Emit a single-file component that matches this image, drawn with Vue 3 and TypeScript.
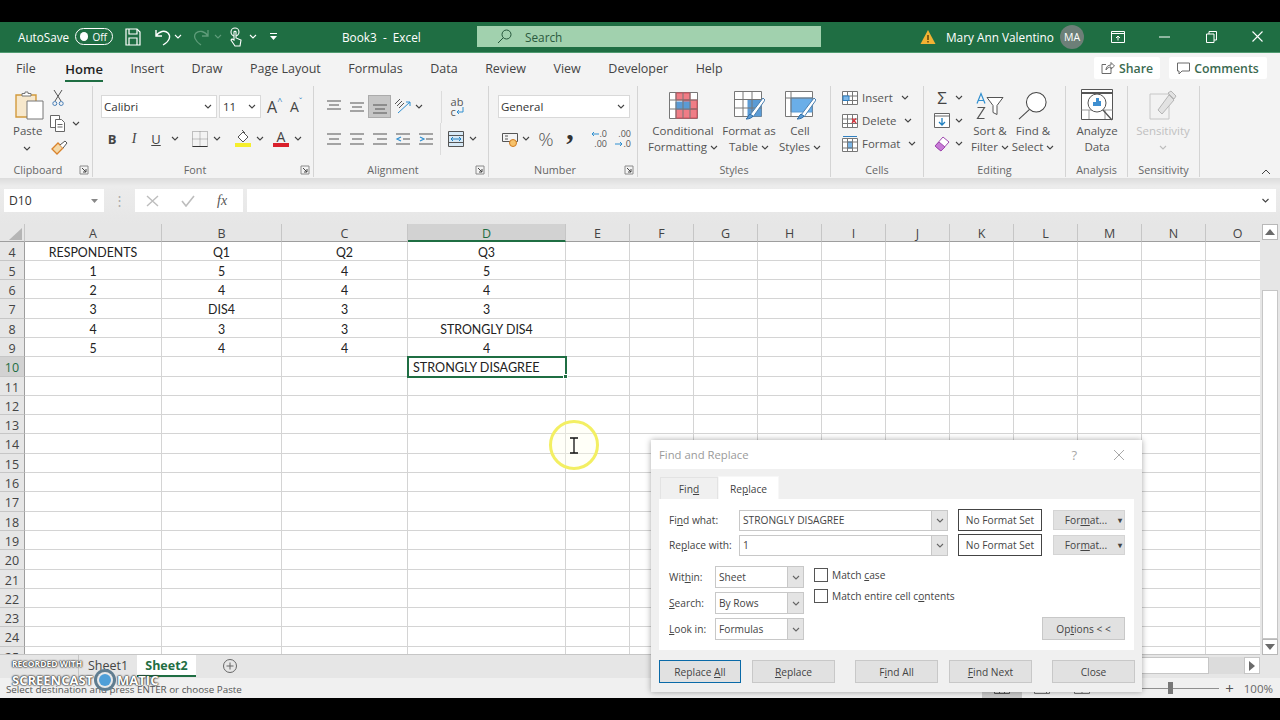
<script setup lang="ts">
interface Column {
  name: string;
  width: number;
}

const columns: Column[] = [
  { name: 'A', width: 137 },
  { name: 'B', width: 120 },
  { name: 'C', width: 126 },
  { name: 'D', width: 158 },
  { name: 'E', width: 64 },
  { name: 'F', width: 64 },
  { name: 'G', width: 64 },
  { name: 'H', width: 64 },
  { name: 'I', width: 64 },
  { name: 'J', width: 64 },
  { name: 'K', width: 64 },
  { name: 'L', width: 64 },
  { name: 'M', width: 64 },
  { name: 'N', width: 64 },
  { name: 'O', width: 64 },
];

const gridColumns = `25px ${columns.map((c) => c.width + 'px').join(' ')}`;

const cells: Record<number, string[]> = {
  4: ['RESPONDENTS', 'Q1', 'Q2', 'Q3'],
  5: ['1', '5', '4', '5'],
  6: ['2', '4', '4', '4'],
  7: ['3', 'DIS4', '3', '3'],
  8: ['4', '3', '3', 'STRONGLY DIS4'],
  9: ['5', '4', '4', '4'],
};

const rowNumbers = Array.from({ length: 22 }, (_, i) => i + 4);

const tabs = ['File', 'Home', 'Insert', 'Draw', 'Page Layout', 'Formulas', 'Data', 'Review', 'View', 'Developer', 'Help'];

function cellText(row: number, col: number) {
  return cells[row]?.[col] ?? '';
}

function isActive(row: number, col: number) {
  return row === 10 && col === 3;
}
</script>

<template>
  <div class="screen">
    <svg class="defs" width="0" height="0" aria-hidden="true">
      <symbol id="chev" viewBox="0 0 8 5">
        <path d="M1 1l3 3 3-3" fill="none" stroke="currentColor" stroke-width="1.1" />
      </symbol>
      <symbol id="launcher" viewBox="0 0 10 10">
        <path d="M1 1h8v8H1z" fill="none" stroke="#8a8a8a" />
        <path d="M3 3l4 4M7 4v3H4" fill="none" stroke="#444" />
      </symbol>
      <symbol id="align" viewBox="0 0 16 14">
        <path d="M1 2h14M3 7h10M1 12h14" stroke="#555" stroke-width="1.2" fill="none" />
      </symbol>
    </svg>

    <!-- title bar -->
    <header class="titlebar">
      <span class="autosave">AutoSave</span>
      <span class="toggle"><i class="knob"></i>Off</span>
      <svg class="t-save" width="16" height="18" viewBox="0 0 16 18" fill="none" stroke="#fff" stroke-width="1.2">
        <path d="M1 1h11l3 3v13H1z" />
        <path d="M4 1v5h8V1M4 17v-7h8v7" />
      </svg>
      <svg class="t-undo" width="20" height="18" viewBox="0 0 20 18" fill="none" stroke="#fff" stroke-width="1.4">
        <path d="M2 2v6h6M2 8c3-5 9-6 12-3s2 8-5 12" />
      </svg>
      <svg class="t-chev" width="8" height="5"><use href="#chev" /></svg>
      <svg class="t-redo" width="17" height="18" viewBox="0 0 17 18" fill="none" stroke="#5f9c7a" stroke-width="1.3">
        <path d="M15 2v6H9M15 8C12 3 6 2 3 5s-1 8 5 12" />
      </svg>
      <svg class="t-chev2" width="8" height="5"><use href="#chev" /></svg>
      <svg class="t-touch" width="13" height="20" viewBox="0 0 13 20" fill="none" stroke="#fff" stroke-width="1.1">
        <circle cx="6" cy="5" r="4" />
        <path d="M5 5v8l-2-1-1 1 4 6h5l1-6-5-2V5c0-1-2-1-2 0z" fill="#1f6e43" />
      </svg>
      <svg class="t-chev3" width="8" height="5"><use href="#chev" /></svg>
      <svg class="t-custom" width="9" height="9" viewBox="0 0 9 9" fill="#fff">
        <path d="M1 1h7v1H1zM1 4h7L4.500 8z" />
      </svg>
      <span class="doc-title">Book3&nbsp; -&nbsp; Excel</span>
      <div class="search">
        <svg width="15" height="15" viewBox="0 0 15 15" fill="none" stroke="#24553a" stroke-width="1">
          <circle cx="9.500" cy="5.500" r="4.500" />
          <path d="M6.300 8.700L1 14" />
        </svg>
        <span>Search</span>
      </div>
      <svg class="t-warn" width="16" height="16" viewBox="0 0 16 16">
        <path d="M8 1l7.500 14H.5z" fill="#f2b233" />
        <path d="M8 6v5M8 12v1.500" stroke="#4a3300" stroke-width="1.300" />
      </svg>
      <span class="user">Mary Ann Valentino</span>
      <span class="avatar">MA</span>
      <svg class="t-display" width="14" height="12" viewBox="0 0 14 12" fill="none" stroke="#fff">
        <path d="M.5.500h13v11H.500zM.5 2.500h13M7 9.500V5M5 7l2-2 2 2" />
      </svg>
      <svg class="t-min" width="11" height="2"><path d="M0 1h11" stroke="#fff" /></svg>
      <svg class="t-restore" width="11" height="12" viewBox="0 0 11 12" fill="none" stroke="#fff">
        <path d="M.5 3h7.500v8.500H.500zM3 3V.5h7.500V9H8" />
      </svg>
      <svg class="t-close" width="11" height="11" viewBox="0 0 11 11" stroke="#fff" stroke-width="1.100"><path d="M.5.500l10 10M10.500.500l-10 10" /></svg>
    </header>

    <!-- ribbon tabs -->
    <nav class="tabs">
      <span v-for="tab in tabs" :key="tab" class="tab" :class="{ 'tab-on': tab === 'Home' }">{{ tab }}</span>
      <div class="tab-actions">
        <span class="tab-btn share">
          <svg width="14" height="14" viewBox="0 0 14 14" fill="none" stroke="#6a6a6a">
            <path d="M10 6.500V12.500H1V3.500H5M5 9c0-3 2-5 5-5V1.500l3.500 3.500L10 8V6C8 6 6 7 5 9z" />
          </svg>
          Share
        </span>
        <span class="tab-btn comments">
          <svg width="13" height="13" viewBox="0 0 13 13" fill="none" stroke="#6a6a6a">
            <path d="M.5 1h12v8H5l-3 3V9H.500z" />
          </svg>
          Comments
        </span>
      </div>
    </nav>

    <!-- ribbon -->
    <section class="ribbon">
      <div class="group g-clip">
        <div class="g-body clip-body">
          <div class="paste">
            <svg width="30" height="29" viewBox="0 0 30 29">
              <path d="M1 4h20v22H1z" fill="#f7e8cc" stroke="#d29a3c" stroke-width="1.400" />
              <path d="M7 5V2.500h3V1h3v1.500h3V5z" fill="#fff" stroke="#777" />
              <path d="M12 10h16v18H12z" fill="#fff" stroke="#777" />
            </svg>
            <span>Paste</span>
            <svg class="gray-chev" width="8" height="5"><use href="#chev" /></svg>
          </div>
          <div class="clip-tools">
            <svg width="12" height="17" viewBox="0 0 12 17" fill="none" stroke="#555">
              <path d="M2 0l7 11M10 0L3 11" />
              <circle cx="2.800" cy="13.500" r="2" stroke="#4a80b8" />
              <circle cx="9.200" cy="13.500" r="2" stroke="#4a80b8" />
            </svg>
            <div class="copy-row">
              <svg width="17" height="17" viewBox="0 0 17 17" fill="#fff" stroke="#666">
                <path d="M.5.500h9v12h-9z" />
                <path d="M5.500 4.500h6l3 3v9h-9z" />
                <path d="M7.500 9.500h5M7.500 12h5" />
              </svg>
              <svg width="8" height="5"><use href="#chev" /></svg>
            </div>
            <svg width="17" height="15" viewBox="0 0 17 15" fill="none">
              <path d="M1 9l6-6 5 5-6 6z" fill="#f4d9a8" stroke="#d9822b" stroke-width="1.300" />
              <path d="M9 5l5-4 2 2-4 5" fill="#fff" stroke="#555" />
            </svg>
          </div>
        </div>
        <footer class="g-foot"><span>Clipboard</span><svg width="10" height="10"><use href="#launcher" /></svg></footer>
      </div>

      <div class="group g-font">
        <div class="g-body two-rows">
          <div class="row">
            <span class="combo font-name">Calibri<svg width="8" height="5"><use href="#chev" /></svg></span>
            <span class="combo font-size">11<svg width="8" height="5"><use href="#chev" /></svg></span>
            <span class="grow">A<sup>^</sup></span>
            <span class="shrink">A<sup>ˇ</sup></span>
          </div>
          <div class="row row-font">
            <span class="c b">B</span>
            <span class="c i">I</span>
            <span class="c u">U</span>
            <span class="ch"><svg width="8" height="5"><use href="#chev" /></svg></span>
            <span class="c sp6">
              <svg width="16" height="16" viewBox="0 0 16 16" fill="none" stroke="#8a8a8a" stroke-dasharray="1 1">
                <path d="M.5.500h15v15H.500zM8 .5v15M.5 8h15" />
                <path d="M.5 15.500h15" stroke="#333" stroke-dasharray="none" />
              </svg>
            </span>
            <span class="ch"><svg width="8" height="5"><use href="#chev" /></svg></span>
            <span class="c sp9">
              <svg width="17" height="19" viewBox="0 0 17 19">
                <path d="M3 8l5-5 5 5-5 5z" fill="#fff" stroke="#555" />
                <path d="M7 1l3 3" stroke="#555" />
                <path d="M0 14h16v4H0z" fill="#f5ee2c" />
              </svg>
            </span>
            <span class="ch"><svg width="8" height="5"><use href="#chev" /></svg></span>
            <span class="c sp4 font-a">A</span>
            <span class="ch"><svg width="8" height="5"><use href="#chev" /></svg></span>
          </div>
        </div>
        <footer class="g-foot"><span>Font</span><svg width="10" height="10"><use href="#launcher" /></svg></footer>
      </div>

      <div class="group g-align">
        <div class="g-body two-rows">
          <div class="row row-align">
            <span class="a"><svg width="16" height="14" viewBox="0 0 16 14" fill="none" stroke="#555" stroke-width="1.200"><path d="M1 1h14M3 5h10M1 9h14" /></svg></span>
            <span class="a"><svg width="16" height="14" viewBox="0 0 16 14" fill="none" stroke="#555" stroke-width="1.200"><path d="M1 3h14M3 7h10M1 11h14" /></svg></span>
            <span class="a a-on"><svg width="16" height="14" viewBox="0 0 16 14" fill="none" stroke="#555" stroke-width="1.200"><path d="M1 5h14M3 9h10M1 13h14" /></svg></span>
            <span class="a">
              <svg width="18" height="17" viewBox="0 0 18 17" fill="none" stroke="#555">
                <path d="M1 6l5-5M3 8l5-5M5 10l5-5" />
                <path d="M4 15L16 4M12 4h4v4" stroke="#2f8fd0" />
              </svg>
            </span>
            <span class="a a-chev"><svg width="8" height="5"><use href="#chev" /></svg></span>
            <span class="w">
              <span class="wrap-txt">ab<br />c</span>
              <svg class="wrap-arrow" width="9" height="9" viewBox="0 0 9 9" fill="none" stroke="#2f8fd0">
                <path d="M8 0v5H2M4 3L2 5l2 2" />
              </svg>
            </span>
          </div>
          <div class="row row-align">
            <span class="a"><svg width="16" height="14"><use href="#align" /></svg></span>
            <span class="a"><svg width="16" height="14"><use href="#align" /></svg></span>
            <span class="a"><svg width="16" height="14" viewBox="0 0 16 14" fill="none" stroke="#555" stroke-width="1.200"><path d="M1 2h14M5 7h10M1 12h14" /></svg></span>
            <span class="a"><svg width="16" height="14" viewBox="0 0 16 14" fill="none" stroke="#555" stroke-width="1.200"><path d="M1 2h14M8 7h7M1 12h14" /><path d="M6 5L2 7l4 2" stroke="#2f8fd0" /></svg></span>
            <span class="a"><svg width="16" height="14" viewBox="0 0 16 14" fill="none" stroke="#555" stroke-width="1.200"><path d="M1 2h14M8 7h7M1 12h14" /><path d="M2 5l4 2-4 2" stroke="#2f8fd0" /></svg></span>
            <span class="w">
              <svg width="16" height="16" viewBox="0 0 16 16" fill="#d7e9f6" stroke="#555">
                <path d="M.5.500h15v15H.500z" />
                <path d="M.5 4.500h15M.5 11.500h15" />
                <path d="M3 8h10M5 6L3 8l2 2M11 6l2 2-2 2" stroke="#1f7fbf" fill="none" />
              </svg>
            </span>
            <span class="ch"><svg width="8" height="5"><use href="#chev" /></svg></span>
          </div>
        </div>
        <footer class="g-foot"><span>Alignment</span><svg width="10" height="10"><use href="#launcher" /></svg></footer>
      </div>

      <div class="group g-num">
        <div class="g-body two-rows">
          <div class="row">
            <span class="combo num-format">General<svg width="8" height="5"><use href="#chev" /></svg></span>
          </div>
          <div class="row row-num">
            <span class="c">
              <svg width="17" height="16" viewBox="0 0 17 16" fill="none" stroke="#555">
                <path d="M.5 2.500h15v8H.500zM3 5h3M3 8h3" />
                <circle cx="11" cy="12" r="3.500" fill="#f6c26b" stroke="#d07a20" />
              </svg>
            </span>
            <span class="ch-s"><svg width="8" height="5"><use href="#chev" /></svg></span>
            <span class="c sp4 pct">%</span>
            <span class="c sp2 comma">,</span>
            <span class="c sp4 dec">
              <span class="dec-line"><svg width="8" height="6" viewBox="0 0 8 6" fill="none" stroke="#2f8fd0"><path d="M8 3H1M3 1L1 3l2 2" /></svg>.0</span>
              <span class="dec-line">.00</span>
            </span>
            <span class="c sp2 dec">
              <span class="dec-line">.00</span>
              <span class="dec-line"><svg width="8" height="6" viewBox="0 0 8 6" fill="none" stroke="#2f8fd0"><path d="M0 3h7M5 1l2 2-2 2" /></svg>.0</span>
            </span>
          </div>
        </div>
        <footer class="g-foot"><span>Number</span><svg width="10" height="10"><use href="#launcher" /></svg></footer>
      </div>

      <div class="group g-styles">
        <div class="g-body bigs">
          <div class="big b-cond">
            <svg width="29" height="27" viewBox="0 0 29 27" stroke="#777" fill="#fff">
              <path d="M.5.500h28v26H.500z" />
              <path d="M7 1h14v7H7zM14 8h14v9H14zM7 17h21v9H7z" fill="#ef7d86" stroke="#d24f5a" />
              <path d="M7 10h14v7H7z" fill="#5b9bd5" stroke="#5b9bd5" />
              <path d="M7 1v25M14 1v25M21 1v25M1 8h27M1 17h27" fill="none" />
            </svg>
            <span>Conditional</span>
            <span>Formatting <svg width="8" height="5"><use href="#chev" /></svg></span>
          </div>
          <div class="big b-table">
            <svg width="31" height="29" viewBox="0 0 31 29" stroke="#777" fill="#fff">
              <path d="M.5.500h27v25H.500z" />
              <path d="M14 9h13v16H14z" fill="#5b9bd5" stroke="#5b9bd5" />
              <path d="M.5 8.500h27M.5 17h27M9 .5v25M18 .5v25" fill="none" />
              <path d="M16 24L29 7l2 2-12 17z" fill="#fff" stroke="#4a7fb0" />
              <path d="M12 28c3 0 6-1 7-3l-3-2c-2 1-2 4-4 5z" fill="#5b9bd5" stroke="#2f6ea8" />
            </svg>
            <span>Format as</span>
            <span>Table <svg width="8" height="5"><use href="#chev" /></svg></span>
          </div>
          <div class="big b-cell">
            <svg width="31" height="29" viewBox="0 0 31 29" stroke="#777" fill="#fff">
              <path d="M.5.500h27v25H.500z" />
              <path d="M6 7h21v14H6z" fill="#6aaee8" stroke="#5b9bd5" />
              <path d="M.5 7h27M6 .5v25" fill="none" />
              <path d="M16 24L29 7l2 2-12 17z" fill="#fff" stroke="#4a7fb0" />
              <path d="M12 28c3 0 6-1 7-3l-3-2c-2 1-2 4-4 5z" fill="#5b9bd5" stroke="#2f6ea8" />
            </svg>
            <span>Cell</span>
            <span>Styles <svg width="8" height="5"><use href="#chev" /></svg></span>
          </div>
        </div>
        <footer class="g-foot no-launcher"><span>Styles</span></footer>
      </div>

      <div class="group g-cells">
        <div class="g-body cell-rows">
          <div class="cell-row">
            <svg width="16" height="14" viewBox="0 0 16 14" fill="#fff" stroke="#777">
              <path d="M.5.500h15v13H.500zM.5 5h15M.5 9.500h15M5.500.5v13M10.500.5v13" />
              <path d="M1 5h6v4.500H1z" fill="#7db7e8" stroke="#2f7fc0" />
            </svg>
            Insert <svg class="cr-chev" width="8" height="5"><use href="#chev" /></svg>
          </div>
          <div class="cell-row">
            <svg width="16" height="14" viewBox="0 0 16 14" fill="#fff" stroke="#777">
              <path d="M.5.500h15v13H.500zM.5 5h15M.5 9.500h15M5.500.5v13M10.500.5v13" />
              <path d="M10 4.500l4 4.500M14 4.500L10 9" stroke="#d8343d" stroke-width="1.400" />
            </svg>
            Delete <svg class="cr-chev" width="8" height="5"><use href="#chev" /></svg>
          </div>
          <div class="cell-row">
            <svg width="16" height="16" viewBox="0 0 16 16" fill="#fff" stroke="#777">
              <path d="M.5 2.500h15v13H.500z" />
              <path d="M5.500 6h5v6h-5z" fill="#7db7e8" stroke="#2f7fc0" />
              <path d="M.5 6h15M.5 12h15M5.500 2.500v13M10.500 2.500v13" fill="none" />
              <path d="M1 .5h14" stroke="#2f7fc0" />
            </svg>
            Format <svg class="cr-chev" width="8" height="5"><use href="#chev" /></svg>
          </div>
        </div>
        <footer class="g-foot no-launcher"><span>Cells</span></footer>
      </div>

      <div class="group g-edit">
        <div class="g-body edit-body">
          <div class="edit-tools">
            <div class="edit-row">
              <span class="sigma">Σ</span>
              <svg width="8" height="5"><use href="#chev" /></svg>
            </div>
            <div class="edit-row">
              <svg width="16" height="15" viewBox="0 0 16 15" fill="#fff" stroke="#666">
                <path d="M.5.500h15v14H.500zM.5 3h15" />
                <path d="M8 5v7M5 9l3 3 3-3" stroke="#1f7fbf" fill="none" stroke-width="1.300" />
              </svg>
              <svg width="8" height="5"><use href="#chev" /></svg>
            </div>
            <div class="edit-row">
              <svg width="16" height="16" viewBox="0 0 16 16">
                <path d="M1 10l8-9 6 5-8 9z" fill="#fff" stroke="#a04ab0" />
                <path d="M1 10l4-4 6 5-4 4z" fill="#c77ad6" stroke="#a04ab0" />
              </svg>
              <svg width="8" height="5"><use href="#chev" /></svg>
            </div>
          </div>
          <div class="big b-sort">
            <svg width="29" height="28" viewBox="0 0 29 28" fill="none">
              <path d="M1 12l4-10 4 10M2.500 9h5" stroke="#2f8fd0" stroke-width="1.200" />
              <path d="M1.500 16h7L1.500 27h7" stroke="#555" stroke-width="1.200" />
              <path d="M11 6h16l-6 8v9l-4-2v-7z" stroke="#555" fill="#fff" />
            </svg>
            <span>Sort &amp;</span>
            <span>Filter <svg width="8" height="5"><use href="#chev" /></svg></span>
          </div>
          <div class="big b-find">
            <svg width="32" height="31" viewBox="0 0 32 31" fill="none" stroke="#444" stroke-width="1.100">
              <circle cx="19.500" cy="12" r="10.500" fill="#fff" />
              <path d="M12 20L1 30" />
            </svg>
            <span>Find &amp;</span>
            <span>Select <svg width="8" height="5"><use href="#chev" /></svg></span>
          </div>
        </div>
        <footer class="g-foot no-launcher"><span>Editing</span></footer>
      </div>

      <div class="group g-analysis">
        <div class="g-body bigs">
          <div class="big b-analyze">
            <svg width="33" height="32" viewBox="0 0 33 32" fill="#fff" stroke="#555">
              <path d="M.5.500h31v30H.500z" />
              <path d="M.5 4h31" stroke-width="2" />
              <path d="M.5 21h31M8 21v9M24 21v9" fill="none" stroke="#999" />
              <circle cx="16" cy="14" r="9" />
              <path d="M12 17v-4h3v4zM15 17V9h3v8zM18 17v-5h2v5z" fill="#3f8fd0" stroke="none" />
              <path d="M22 21l9 10" stroke-width="1.300" />
            </svg>
            <span>Analyze</span>
            <span>Data</span>
          </div>
        </div>
        <footer class="g-foot no-launcher"><span>Analysis</span></footer>
      </div>

      <div class="group g-sens">
        <div class="g-body bigs">
          <div class="big b-sens">
            <svg width="28" height="30" viewBox="0 0 28 30" fill="#fff" stroke="#c6c6c6">
              <path d="M1 4h19v25H1z" fill="#f2f2f2" />
              <path d="M9 20L20 5l5 5-12 14z" fill="#e2e2e2" stroke="#b5b5b5" />
              <path d="M19 3l3-2 5 5-2 3z" fill="#e2e2e2" stroke="#b5b5b5" />
            </svg>
            <span>Sensitivity</span>
            <svg class="sens-chev" width="8" height="5"><use href="#chev" /></svg>
          </div>
        </div>
        <footer class="g-foot no-launcher"><span>Sensitivity</span></footer>
      </div>

      <div class="collapse">
        <svg width="10" height="6" viewBox="0 0 10 6" fill="none" stroke="#444"><path d="M1 5l4-4 4 4" /></svg>
      </div>
    </section>

    <!-- formula bar -->
    <section class="formula">
      <div class="name-box">D10<svg width="7" height="4" viewBox="0 0 7 4"><path d="M0 0h7L3.500 4z" fill="#888" /></svg></div>
      <div class="dots">⋮</div>
      <div class="fx-box">
        <svg width="13" height="12" viewBox="0 0 13 12" stroke="#bdbdbd" stroke-width="1.400"><path d="M1 1l11 10M12 1L1 11" /></svg>
        <svg width="14" height="12" viewBox="0 0 14 12" fill="none" stroke="#bdbdbd" stroke-width="1.600"><path d="M1 6l4 5 8-10" /></svg>
        <i>fx</i>
      </div>
      <div class="fx-input">
        <svg width="9" height="5"><use href="#chev" /></svg>
      </div>
    </section>

    <!-- sheet -->
    <main class="sheet-wrap">
      <div class="sheet" :style="{ gridTemplateColumns: gridColumns }">
        <div class="corner"><svg width="15" height="14" viewBox="0 0 15 14"><path d="M14 1v12H1z" fill="#b5b5b5" /></svg></div>
        <div
          v-for="col in columns"
          :key="col.name"
          class="col-head"
          :class="{ 'col-on': col.name === 'D' }"
        >{{ col.name }}</div>
        <template v-for="row in rowNumbers" :key="row">
          <div class="row-head" :class="{ 'row-on': row === 10 }">{{ row }}</div>
          <div
            v-for="(col, i) in columns"
            :key="col.name"
            class="cell"
            :class="{ active: isActive(row, i) }"
          >
            <template v-if="isActive(row, i)">STRONGLY DISAGREE<i class="handle"></i></template>
            <template v-else>{{ cellText(row, i) }}</template>
          </div>
        </template>
      </div>
      <aside class="vscroll">
        <span class="sb-btn"><svg width="10" height="6" viewBox="0 0 10 6"><path d="M5 0l5 6H0z" fill="#6a6a6a" /></svg></span>
        <span class="v-track"></span>
        <span class="v-thumb"></span>
        <span class="sb-btn"><svg width="10" height="6" viewBox="0 0 10 6"><path d="M0 0h10L5 6z" fill="#6a6a6a" /></svg></span>
      </aside>
    </main>

    <!-- sheet tabs -->
    <section class="sheetbar">
      <span class="sheet-tab">Sheet1</span>
      <span class="sheet-tab sheet-on">Sheet2</span>
      <span class="plus"><svg width="14" height="14" viewBox="0 0 14 14" fill="none" stroke="#666"><circle cx="7" cy="7" r="6.500" /><path d="M7 3.500v7M3.500 7h7" /></svg></span>
      <div class="h-scroll">
        <span class="h-thumb"></span>
        <span class="h-track"></span>
        <span class="h-btn"><svg width="6" height="10" viewBox="0 0 6 10"><path d="M0 0l6 5-6 5z" fill="#6a6a6a" /></svg></span>
      </div>
    </section>

    <!-- status bar -->
    <footer class="status">
      <span class="status-text">Select destination and press ENTER or choose Paste</span>
      <div class="status-right">
        <span class="view view-on"><svg width="16" height="12" viewBox="0 0 16 12" fill="none" stroke="#555"><path d="M.5.500h15v11H.500zM.5 4h15M.5 8h15M5.500.5v11M10.500.5v11" /></svg></span>
        <span class="view"><svg width="16" height="12" viewBox="0 0 16 12" fill="none" stroke="#777"><path d="M.5.500h15v11H.500zM3.500 3h9v9" /></svg></span>
        <span class="view"><svg width="16" height="12" viewBox="0 0 16 12" fill="none" stroke="#777"><path d="M.5.500h15v11H.500zM8 .5v11" /></svg></span>
        <span class="slider"><i></i></span>
        <span class="zoom-plus">+</span>
        <span class="zoom-val">100%</span>
      </div>
    </footer>

    <!-- screen recorder watermark -->
    <div class="watermark">
      <div class="wm-top">RECORDED WITH</div>
      <div class="wm-main">SCREENCAST<i class="wm-dot"></i>MATIC</div>
    </div>

    <!-- mouse highlight -->
    <div class="pointer">
      <svg width="10" height="17" viewBox="0 0 10 17" fill="none" stroke="#111" stroke-width="1.300"><path d="M1 1h8M1 16h8M5 1v15" /></svg>
    </div>

    <!-- find and replace dialog -->
    <div class="dialog">
      <div class="dlg-title">
        <span>Find and Replace</span>
        <span class="dlg-help">?</span>
        <svg width="12" height="12" viewBox="0 0 12 12" stroke="#a8a8a8"><path d="M1 1l10 10M11 1L1 11" /></svg>
      </div>
      <div class="dlg-tabs">
        <span class="dlg-tab">Fin<u>d</u></span>
        <span class="dlg-tab dlg-tab-on">Re<u>p</u>lace</span>
      </div>
      <div class="dlg-panel">
        <div class="dlg-line">
          <label class="lb-what">Fi<u>n</u>d what:</label>
          <div class="dlg-input">STRONGLY DISAGREE<span class="dd"><svg width="8" height="5"><use href="#chev" /></svg></span></div>
          <span class="no-format">No Format Set</span>
          <span class="format-btn">For<u>m</u>at...<b>▾</b></span>
        </div>
        <div class="dlg-line">
          <label class="lb-what">Re<u>p</u>lace with:</label>
          <div class="dlg-input">1<span class="dd"><svg width="8" height="5"><use href="#chev" /></svg></span></div>
          <span class="no-format">No Format Set</span>
          <span class="format-btn">For<u>m</u>at...<b>▾</b></span>
        </div>
        <div class="dlg-lower">
          <div class="dlg-selects">
            <div class="sel-line"><label>Wit<u>h</u>in:</label><div class="dlg-select">Sheet<span class="dd"><svg width="8" height="5"><use href="#chev" /></svg></span></div></div>
            <div class="sel-line"><label><u>S</u>earch:</label><div class="dlg-select">By Rows<span class="dd"><svg width="8" height="5"><use href="#chev" /></svg></span></div></div>
            <div class="sel-line"><label><u>L</u>ook in:</label><div class="dlg-select">Formulas<span class="dd"><svg width="8" height="5"><use href="#chev" /></svg></span></div></div>
          </div>
          <div class="dlg-checks">
            <div class="chk"><i></i><span>Match <u>c</u>ase</span></div>
            <div class="chk"><i></i><span>Match entire cell c<u>o</u>ntents</span></div>
          </div>
          <span class="dlg-btn options">Op<u>t</u>ions &lt; &lt;</span>
        </div>
      </div>
      <div class="dlg-actions">
        <span class="dlg-btn primary">Replace <u>A</u>ll</span>
        <span class="dlg-btn gap-s"><u>R</u>eplace</span>
        <span class="dlg-btn gap-l">F<u>i</u>nd All</span>
        <span class="dlg-btn gap-s"><u>F</u>ind Next</span>
        <span class="dlg-btn gap-l">Close</span>
      </div>
    </div>
  </div>
</template>

<style scoped>
.screen {
  position: relative;
  width: 1280px;
  height: 720px;
  padding: 22px 0;
  box-sizing: border-box;
  background: #000;
  overflow: hidden;
  display: flex;
  flex-direction: column;
  font-family: 'Open Sans', 'Liberation Sans', sans-serif;
  color: #444;
}

.defs {
  position: absolute;
}

svg {
  display: block;
  flex: none;
}

/* title bar */
.titlebar {
  height: 31px;
  flex: none;
  background: #1f6e43;
  border-bottom: 1px solid #4f9a70;
  box-sizing: border-box;
  display: flex;
  align-items: center;
  padding: 0 0 1px 18px;
  color: #fff;
  font-size: 11.700px;
}

.autosave {
  width: 57px;
}

.toggle {
  width: 38px;
  height: 17px;
  border: 1px solid #fff;
  border-radius: 9px;
  box-sizing: border-box;
  display: flex;
  align-items: center;
  justify-content: flex-end;
  padding: 0 5px 0 4px;
  font-size: 10px;
  position: relative;
}

.knob {
  width: 9px;
  height: 9px;
  border-radius: 50%;
  background: #fff;
  margin-right: 4px;
}

.t-save { margin-left: 12px; }
.t-undo { margin-left: 13px; }
.t-chev { color: #fff; }
.t-redo { margin-left: 11px; }
.t-chev2 { margin-left: 4px; color: #5f9c7a; }
.t-touch { margin-left: 7px; }
.t-chev3 { margin-left: 7px; color: #fff; }
.t-custom { margin-left: 12px; }

.doc-title {
  margin-left: 64px;
  width: 135px;
  font-size: 11.800px;
}

.search {
  width: 344px;
  height: 21px;
  background: #a1d1ae;
  color: #2b5a3e;
  display: flex;
  align-items: center;
  gap: 13px;
  padding-left: 20px;
  box-sizing: border-box;
  font-size: 11.800px;
}

.t-warn { margin-left: 99px; }

.user {
  margin-left: 10px;
  width: 114px;
  white-space: nowrap;
  font-size: 11.800px;
}

.avatar {
  width: 24px;
  height: 24px;
  border-radius: 50%;
  background: #6d7f78;
  font-size: 10.500px;
  display: flex;
  align-items: center;
  justify-content: center;
}

.t-display { margin-left: 27px; }
.t-min { margin-left: 34px; }
.t-restore { margin-left: 36px; }
.t-close { margin-left: 35px; }

/* ribbon tabs */
.tabs {
  height: 31px;
  flex: none;
  background: #f3f3f3;
  display: flex;
  padding-left: 16px;
  font-size: 12.500px;
  color: #444;
  position: relative;
}

.tab {
  margin-right: 27.500px;
  line-height: 32px;
  white-space: nowrap;
}

.tab:first-child {
  margin-right: 29.500px;
}

.tab-on {
  color: #1f1f1f;
  font-size: 13px;
  font-weight: 600;
  border-bottom: 2px solid #1f6e43;
  height: 27px;
}

.tab-actions {
  margin-left: auto;
  margin-right: 13px;
  display: flex;
  gap: 9px;
  padding-top: 4px;
}

.tab-btn {
  height: 22px;
  background: #fff;
  border-radius: 2px;
  display: flex;
  align-items: center;
  justify-content: center;
  gap: 4px;
  font-weight: 600;
  color: #3b6a50;
  font-size: 12.300px;
}

.share { width: 66px; }
.comments { width: 98px; }

/* ribbon */
.ribbon {
  height: 94px;
  flex: none;
  background: #f3f3f3;
  display: flex;
  font-size: 11.500px;
  color: #555;
}

.group {
  flex: none;
  display: flex;
  flex-direction: column;
  margin-top: 2px;
  margin-bottom: 1px;
  border-right: 1px solid #d4d4d4;
  box-sizing: border-box;
}

.g-clip { width: 93px; }
.g-font { width: 221px; }
.g-align { width: 175px; }
.g-num { width: 149px; }
.g-styles { width: 193px; }
.g-cells { width: 93px; }
.g-edit { width: 142px; }
.g-analysis { width: 62px; }
.g-sens { width: 72px; }

.g-body {
  height: 80px;
}

.g-foot {
  flex: 1;
  display: flex;
  align-items: center;
  padding: 1px 3px 0 0;
  font-size: 10.800px;
  color: #666;
}

.g-foot span {
  flex: 1;
  text-align: center;
  padding-right: 3px;
}

.no-launcher {
  padding-right: 0;
}

.no-launcher span {
  padding-right: 0;
}

.clip-body {
  display: flex;
}

.paste {
  width: 50px;
  padding-left: 15px;
  padding-top: 5px;
  box-sizing: border-box;
  display: flex;
  flex-direction: column;
  align-items: flex-start;
}

.paste span {
  margin: 3px 0 0 -2px;
  line-height: 16px;
}

.paste .gray-chev {
  margin: 7px 0 0 8px;
  color: #444;
}

.clip-tools {
  padding-top: 4px;
  display: flex;
  flex-direction: column;
  align-items: flex-start;
  gap: 8px;
  color: #444;
}

.clip-tools > svg:first-child {
  margin-left: 2px;
}

.copy-row {
  display: flex;
  align-items: center;
  gap: 5px;
}

.clip-tools > svg:last-child {
  margin-left: 1px;
}

.two-rows {
  display: flex;
  flex-direction: column;
  gap: 9px;
  padding-top: 9px;
  box-sizing: border-box;
}

.row {
  display: flex;
  align-items: center;
  height: 23px;
  padding-left: 8px;
}

.combo {
  height: 23px;
  background: #fff;
  border: 1px solid #d9d9d9;
  box-sizing: border-box;
  display: flex;
  align-items: center;
  justify-content: space-between;
  padding: 0 4px 0 2px;
  font-size: 11.500px;
  color: #333;
}

.combo svg {
  color: #444;
}

.font-name { width: 116px; }
.font-size { width: 42px; margin-left: 2px; padding-left: 3px; }
.num-format { width: 132px; margin-left: 1px; padding-left: 2px; }

.grow, .shrink {
  font-size: 16px;
  color: #444;
  margin-left: 6px;
  display: flex;
  width: 15px;
}

.shrink {
  font-size: 14px;
  margin-left: 8px;
}

.grow sup, .shrink sup {
  font-size: 9px;
  color: #2f7fc0;
  line-height: 10px;
}

.c {
  width: 22px;
  display: flex;
  justify-content: center;
  align-items: center;
  color: #444;
  flex: none;
}

.b { font-weight: 700; font-size: 13px; }
.i { font-style: italic; font-family: 'Liberation Serif', serif; font-size: 14px; }
.u { text-decoration: underline; font-size: 13px; }

.ch {
  width: 12px;
  display: flex;
  justify-content: center;
  color: #444;
}

.ch-s {
  width: 10px;
  display: flex;
  justify-content: center;
  color: #444;
}

.row-font .ch:nth-child(4) { width: 16px; }
.sp6 { margin-left: 6px; }
.sp9 { margin-left: 9px; }
.sp4 { margin-left: 4px; }
.sp2 { margin-left: 2px; }

.font-a {
  font-size: 14px;
  line-height: 13px;
  border-bottom: 4px solid #d9202c;
  width: 16px;
  margin-left: 7px;
  margin-right: 3px;
}

.row-align .a {
  width: 23px;
  height: 23px;
  flex: none;
  display: flex;
  align-items: center;
  justify-content: center;
}

.a-on {
  background: #c6c6c6;
  border: 1px solid #ababab;
  box-sizing: border-box;
}

.a-chev {
  color: #444;
  justify-content: flex-start !important;
  padding-left: 1px;
}

.row-align .w {
  width: 22px;
  height: 32px;
  flex: none;
  margin-left: 3px;
  padding-left: 4px;
  border-left: 1px solid #dcdcdc;
  display: flex;
  align-items: center;
  justify-content: center;
  position: relative;
}

.wrap-txt {
  display: block;
  font-size: 11px;
  line-height: 10px;
  color: #555;
}

.wrap-arrow {
  position: absolute;
  right: 4px;
  bottom: 7px;
}

.row-num {
  padding-left: 10px;
}

.pct {
  font-size: 19px;
  font-weight: 300;
  color: #555;
}

.comma {
  font-size: 30px;
  font-weight: 700;
  line-height: 12px;
  font-family: 'Liberation Serif', serif;
  color: #333;
  padding-bottom: 20px;
}

.dec {
  display: block;
  font-size: 9px;
  line-height: 10px;
  color: #555;
}

.dec-line {
  display: flex;
  align-items: center;
  justify-content: flex-end;
}

.bigs {
  display: flex;
  padding-left: 7px;
}

.big {
  display: flex;
  flex-direction: column;
  align-items: center;
  line-height: 16px;
  white-space: nowrap;
  flex: none;
}

.big > svg:first-child {
  height: 29px;
  margin: 5px 0 3px;
}

.big span svg {
  display: inline-block;
  vertical-align: middle;
  color: #444;
}

.b-cond { width: 76px; }
.b-table { width: 56px; }
.b-cell { width: 46px; }
.b-sort { width: 44px; }
.b-find { width: 42px; }
.b-analyze { width: 48px; }
.b-sens { width: 60px; color: #c0c0c0; }

.g-analysis .bigs { padding-left: 7px; }
.g-sens .bigs { padding-left: 5px; }
.b-analyze > svg:first-child,
.b-sens > svg:first-child { height: 32px; margin: 3px 0 2px; }
.sens-chev { margin-top: 6px; color: #bdbdbd; }

.cell-rows {
  padding: 0 0 0 11px;
  display: flex;
  flex-direction: column;
}

.cell-row {
  height: 23px;
  display: flex;
  align-items: center;
  gap: 4px;
  font-size: 11.400px;
}

.cr-chev {
  margin-left: 4px;
  color: #444;
}

.edit-body {
  display: flex;
}

.edit-tools {
  width: 44px;
  padding: 0 0 0 10px;
  box-sizing: border-box;
  flex: none;
}

.edit-row {
  height: 23px;
  display: flex;
  align-items: center;
  gap: 5px;
  color: #444;
}

.sigma {
  width: 16px;
  text-align: center;
  font-size: 17px;
  line-height: 20px;
}

.collapse {
  flex: 1;
  display: flex;
  justify-content: flex-end;
  align-items: flex-end;
  padding: 0 9px 3px 0;
}

/* formula bar */
.formula {
  height: 46px;
  flex: none;
  background: linear-gradient(#dcdcdc, #ececec 8px, #e6e6e6);
  display: flex;
  align-items: flex-start;
  padding-top: 11px;
  box-sizing: border-box;
}

.name-box {
  width: 100px;
  height: 23px;
  margin-left: 4px;
  background: #fff;
  display: flex;
  align-items: center;
  justify-content: space-between;
  padding: 0 6px 0 5px;
  box-sizing: border-box;
  font-size: 12.200px;
  color: #333;
}

.dots {
  width: 31px;
  text-align: center;
  line-height: 22px;
  color: #aaa;
  font-size: 13px;
}

.fx-box {
  width: 108px;
  height: 23px;
  background: #fff;
  display: flex;
  align-items: center;
  gap: 22px;
  padding-left: 11px;
  box-sizing: border-box;
}

.fx-box i {
  font-family: 'Liberation Serif', serif;
  font-size: 14px;
  color: #555;
}

.fx-input {
  margin-left: 4px;
  width: 1029px;
  height: 23px;
  background: #fff;
  display: flex;
  align-items: center;
  justify-content: flex-end;
  padding-right: 6px;
  box-sizing: border-box;
  color: #444;
}

/* sheet */
.sheet-wrap {
  height: 431px;
  flex: none;
  display: flex;
  background: #e6e6e6;
  overflow: hidden;
}

.sheet {
  width: 1260px;
  flex: none;
  display: grid;
  grid-auto-rows: 19.300px;
  grid-template-rows: 17.500px;
  background: #fff;
  font-family: Lato, 'Liberation Sans', sans-serif;
  font-size: 12.400px;
  color: #222;
  border-bottom: 1px solid #c6c6c6;
  overflow: hidden;
}

.corner {
  background: #e6e6e6;
  border-right: 1px solid #c6c6c6;
  border-bottom: 1px solid #9e9e9e;
  box-sizing: border-box;
  display: flex;
  justify-content: flex-end;
  padding-right: 1px;
  align-items: flex-end;
}

.col-head {
  background: #e6e6e6;
  border-right: 1px solid #c6c6c6;
  border-bottom: 1px solid #9e9e9e;
  box-sizing: border-box;
  text-align: center;
  line-height: 20px;
  font-family: 'Open Sans', sans-serif;
  font-size: 12.500px;
  color: #444;
}

.col-on {
  background: #d2d2d2;
  border-bottom: 2px solid #1f6e43;
  color: #1f6e43;
}

.row-head {
  background: #e6e6e6;
  border-right: 1px solid #9e9e9e;
  border-bottom: 1px solid #c6c6c6;
  box-sizing: border-box;
  text-align: center;
  line-height: 21px;
  font-family: 'Open Sans', sans-serif;
  font-size: 12.500px;
  color: #444;
  overflow: hidden;
}

.row-on {
  background: #d2d2d2;
  color: #1f6e43;
}

.cell {
  border-right: 1px solid #d4d4d4;
  border-bottom: 1px solid #d4d4d4;
  box-sizing: border-box;
  text-align: center;
  line-height: 21px;
  white-space: nowrap;
}

.active {
  position: relative;
  outline: 2px solid #1f6e43;
  outline-offset: -1px;
  text-align: left;
  padding-left: 5px;
  font-size: 12.600px;
  z-index: 1;
}

.handle {
  position: absolute;
  right: -3px;
  bottom: -3px;
  width: 5px;
  height: 5px;
  background: #1f6e43;
  border: 1px solid #fff;
  box-sizing: border-box;
}

.vscroll {
  width: 20px;
  flex: none;
  display: flex;
  flex-direction: column;
  align-items: center;
  padding: 0 2px;
  box-sizing: border-box;
  background: #e6e6e6;
}

.sb-btn {
  width: 16px;
  height: 16px;
  background: #fff;
  border: 1px solid #b8b8b8;
  box-sizing: border-box;
  display: flex;
  align-items: center;
  justify-content: center;
  flex: none;
}

.v-track {
  height: 50px;
  flex: none;
}

.v-thumb {
  width: 16px;
  flex: 1;
  background: #fff;
  border: 1px solid #c6c6c6;
  box-sizing: border-box;
}

/* sheet tabs */
.sheetbar {
  height: 23px;
  flex: none;
  background: #e6e6e6;
  display: flex;
  font-size: 12.500px;
  padding-left: 78px;
  position: relative;
}

.sheet-tab {
  width: 59px;
  height: 22px;
  border-left: 1px solid #c6c6c6;
  box-sizing: border-box;
  text-align: center;
  line-height: 21px;
  color: #444;
}

.sheet-on {
  background: #fff;
  color: #1f6e43;
  font-weight: 700;
  border-bottom: 2px solid #1f6e43;
  border-left: none;
}

.plus {
  margin: 4px 0 0 27px;
}

.h-scroll {
  margin-left: auto;
  margin-right: 20px;
  width: 600px;
  height: 17px;
  margin-top: 2px;
  display: flex;
}

.h-thumb {
  flex: 1;
  background: #fff;
  border: 1px solid #c6c6c6;
  box-sizing: border-box;
}

.h-track {
  width: 35px;
  background: #dcdcdc;
}

.h-btn {
  width: 16px;
  background: #fff;
  border: 1px solid #c6c6c6;
  box-sizing: border-box;
  display: flex;
  align-items: center;
  justify-content: center;
}

/* status bar */
.status {
  height: 20px;
  flex: none;
  background: #f0f0f0;
  display: flex;
  align-items: center;
  padding-left: 6px;
  font-size: 9.800px;
  color: #555;
}

.status-text {
  padding-top: 2px;
}

.status-right {
  margin-left: auto;
  display: flex;
  align-items: center;
  padding-right: 7px;
}

.view {
  width: 40px;
  height: 20px;
  display: flex;
  align-items: center;
  justify-content: center;
}

.view-on {
  background: #c9c9c9;
}

.slider {
  width: 100px;
  height: 1px;
  background: #8f8f8f;
  margin-left: 17px;
  position: relative;
}

.slider i {
  position: absolute;
  left: 49px;
  top: -6px;
  width: 5px;
  height: 12px;
  background: #777;
}

.zoom-plus {
  font-size: 15px;
  margin-left: 6px;
  color: #555;
}

.zoom-val {
  font-size: 11.500px;
  margin-left: 10px;
  color: #666;
}

/* watermark */
.watermark {
  position: absolute;
  left: 12px;
  top: 658px;
  color: #fff;
  font-weight: 700;
  text-shadow: 0 0 2px #333, 0 0 2px #333, 0 0 1px #000;
}

.wm-top {
  font-size: 8.500px;
  line-height: 12px;
  white-space: nowrap;
}

.wm-main {
  font-size: 13px;
  line-height: 18px;
  display: flex;
  align-items: center;
  margin-top: 1px;
}

.wm-dot {
  width: 12px;
  height: 12px;
  margin: 0 6px;
  border-radius: 50%;
  background: #4f9fd8;
  box-shadow: 0 0 0 2px #e9e9e9, 0 0 0 5px #607d90;
  flex: none;
}

/* pointer */
.pointer {
  position: absolute;
  left: 549px;
  top: 420px;
  width: 50px;
  height: 50px;
  box-sizing: border-box;
  border: 3px solid #f3ef62;
  border-radius: 50%;
  background: rgba(255, 255, 235, 0.35);
  display: flex;
  align-items: center;
  justify-content: center;
  z-index: 5;
}

/* dialog */
.dialog {
  position: absolute;
  left: 651px;
  top: 440px;
  width: 491px;
  height: 252px;
  background: #f0f0f0;
  box-shadow: 0 0 6px rgba(0, 0, 0, 0.35);
  font-size: 10.200px;
  color: #444;
  z-index: 6;
  display: flex;
  flex-direction: column;
}

.dlg-title {
  height: 29px;
  flex: none;
  background: #fff;
  display: flex;
  align-items: center;
  padding: 0 17px 0 8px;
  color: #9a9a9a;
  font-size: 11.300px;
}

.dlg-title span:first-child {
  flex: 1;
}

.dlg-help {
  margin-right: 36px;
  font-size: 13px;
  color: #a8a8a8;
}

.dlg-tabs {
  height: 30px;
  flex: none;
  display: flex;
  align-items: flex-end;
  padding-left: 9px;
}

.dlg-tab {
  width: 58px;
  height: 22px;
  line-height: 23px;
  text-align: center;
  border: 1px solid #e3e3e3;
  border-bottom: none;
  box-sizing: border-box;
}

.dlg-tab-on {
  width: 61px;
  height: 23px;
  line-height: 25px;
  background: #fff;
  border-color: #f7f7f7;
}

.dlg-panel {
  height: 151px;
  flex: none;
  margin: 0 8px;
  background: #fff;
  padding: 10px 9px 10px 10px;
  box-sizing: border-box;
  display: flex;
  flex-direction: column;
}

.dlg-line {
  display: flex;
  align-items: center;
  height: 22px;
  margin-bottom: 3px;
}

.lb-what {
  width: 70px;
  flex: none;
}

.dlg-input {
  width: 209px;
  height: 21px;
  flex: none;
  border: 1px solid #c8c8c8;
  box-sizing: border-box;
  padding-left: 3px;
  display: flex;
  align-items: center;
  justify-content: space-between;
}

.dd {
  width: 16px;
  height: 100%;
  background: #e4e4e4;
  color: #666;
  display: flex;
  align-items: center;
  justify-content: center;
  border-left: 1px solid #c8c8c8;
  box-sizing: border-box;
}

.no-format {
  width: 84px;
  height: 22px;
  margin-left: 10px;
  flex: none;
  border: 1px solid #444;
  box-sizing: border-box;
  text-align: center;
  line-height: 21px;
}

.format-btn {
  width: 72px;
  height: 20px;
  margin-left: 11px;
  flex: none;
  background: #e1e1e1;
  border: 1px solid #d4d4d4;
  box-sizing: border-box;
  text-align: center;
  line-height: 18px;
  position: relative;
  padding-right: 6px;
}

.format-btn b {
  position: absolute;
  right: 2px;
  font-size: 8px;
  line-height: 18px;
}

.dlg-lower {
  display: flex;
  margin-top: 7px;
  position: relative;
}

.dlg-selects {
  display: flex;
  flex-direction: column;
  gap: 4px;
}

.sel-line {
  display: flex;
  align-items: center;
}

.sel-line label {
  width: 46px;
}

.dlg-select {
  width: 89px;
  height: 22px;
  border: 1px solid #c8c8c8;
  box-sizing: border-box;
  padding-left: 3px;
  display: flex;
  align-items: center;
  justify-content: space-between;
}

.dlg-checks {
  margin: 2px 0 0 10px;
  display: flex;
  flex-direction: column;
  gap: 7px;
}

.chk {
  display: flex;
  align-items: center;
  gap: 4px;
  height: 14px;
}

.chk i {
  width: 14px;
  height: 14px;
  border: 1px solid #555;
  box-sizing: border-box;
  background: #fff;
}

.dlg-btn {
  width: 83px;
  height: 23px;
  flex: none;
  background: #e1e1e1;
  border: 1px solid #c8c8c8;
  box-sizing: border-box;
  text-align: center;
  line-height: 23px;
}

.options {
  margin: 51px 0 0 auto;
}

.dlg-actions {
  display: flex;
  padding: 10px 7px 0 8px;
}

.primary {
  width: 82px;
  border: 1.500px solid #0a6aa8;
}

.gap-s {
  margin-left: 11px;
}

.gap-l {
  margin-left: 20px;
}
</style>

<style>
html,
body {
  margin: 0;
  background: #000;
}
</style>
